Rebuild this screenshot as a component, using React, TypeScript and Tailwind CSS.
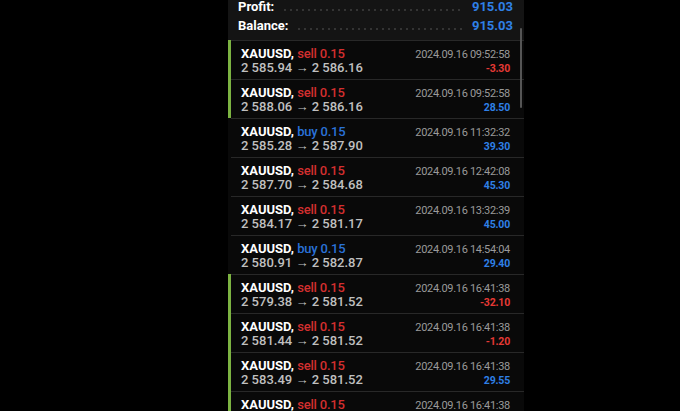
import React from "react";

type Row = {
  side: "sell" | "buy";
  open: string;
  close: string;
  time: string;
  profit: string;
  green: boolean;
};

const rows: Row[] = [
  { side: "sell", open: "2 585.94", close: "2 586.16", time: "2024.09.16 09:52:58", profit: "-3.30", green: true },
  { side: "sell", open: "2 588.06", close: "2 586.16", time: "2024.09.16 09:52:58", profit: "28.50", green: true },
  { side: "buy", open: "2 585.28", close: "2 587.90", time: "2024.09.16 11:32:32", profit: "39.30", green: false },
  { side: "sell", open: "2 587.70", close: "2 584.68", time: "2024.09.16 12:42:08", profit: "45.30", green: false },
  { side: "sell", open: "2 584.17", close: "2 581.17", time: "2024.09.16 13:32:39", profit: "45.00", green: false },
  { side: "buy", open: "2 580.91", close: "2 582.87", time: "2024.09.16 14:54:04", profit: "29.40", green: false },
  { side: "sell", open: "2 579.38", close: "2 581.52", time: "2024.09.16 16:41:38", profit: "-32.10", green: true },
  { side: "sell", open: "2 581.44", close: "2 581.52", time: "2024.09.16 16:41:38", profit: "-1.20", green: true },
  { side: "sell", open: "2 583.49", close: "2 581.52", time: "2024.09.16 16:41:38", profit: "29.55", green: true },
  { side: "sell", open: "2 583.49", close: "2 581.52", time: "2024.09.16 16:41:38", profit: "29.55", green: true },
];

function SummaryLine({ label, value }: { label: string; value: string }) {
  return (
    <div className="flex h-[19px] items-center">
      <span className="text-[13px] font-bold text-white">{label}</span>
      <div className="mx-[10px] mt-[6px] h-[2px] flex-1 bg-[linear-gradient(to_right,#343434_2px,transparent_2px)] bg-[length:6px_2px] bg-repeat-x" />
      <span className="text-[13px] font-bold text-[#2f80e6]">{value}</span>
    </div>
  );
}

function TradeRow({ r }: { r: Row }) {
  const neg = r.profit.startsWith("-");
  return (
    <div className="flex h-[39px] shrink-0">
      <div className={r.green ? "w-[3px] bg-[#7cb342]" : "w-[3px]"} />
      <div className="flex-1 border-t border-[#282828] bg-[#090909] pl-[10px] pr-[14px] pt-[6px]">
        <div className="flex h-[14px] items-baseline justify-between leading-[14px]">
          <span className="text-[13px]">
            <span className="font-bold text-white">XAUUSD,</span>{" "}
            <span
              className={
                r.side === "sell"
                  ? "font-medium tracking-[-0.2px] text-[#d32f2f]"
                  : "font-medium tracking-[-0.2px] text-[#2a72d8]"
              }
            >
              {r.side} 0.15
            </span>
          </span>
          <span className="text-[11px] tracking-[-0.3px] text-[#9a9a9a]">{r.time}</span>
        </div>
        <div className="flex h-[14px] items-baseline justify-between leading-[14px]">
          <span className="text-[13px] font-medium text-[#c0c0c0]">
            {r.open} → {r.close}
          </span>
          <span
            className={
              neg
                ? "text-[10.5px] font-bold tracking-[-0.2px] text-[#e53935]"
                : "text-[10.5px] font-bold tracking-[-0.2px] text-[#2f80e6]"
            }
          >
            {r.profit}
          </span>
        </div>
      </div>
    </div>
  );
}

export default function App() {
  return (
    <div
      className="flex h-[411px] w-[680px] overflow-hidden bg-black pl-[228px]"
      style={{ fontFamily: "Roboto, 'Liberation Sans', sans-serif" }}
    >
      <div className="relative flex h-[411px] w-[296px] flex-col overflow-hidden bg-[#090909]">
        <div className="h-[40px] shrink-0 overflow-hidden bg-[#141414] pl-[10px] pr-[11px]">
          <div className="-mt-[3px]">
            <SummaryLine label="Profit:" value="915.03" />
            <SummaryLine label="Balance:" value="915.03" />
          </div>
        </div>
        {rows.map((r, i) => (
          <TradeRow key={i} r={r} />
        ))}
        <div className="absolute left-[292px] top-[28px] h-[80px] w-[2px] rounded-full bg-[#555]" />
      </div>
    </div>
  );
}
